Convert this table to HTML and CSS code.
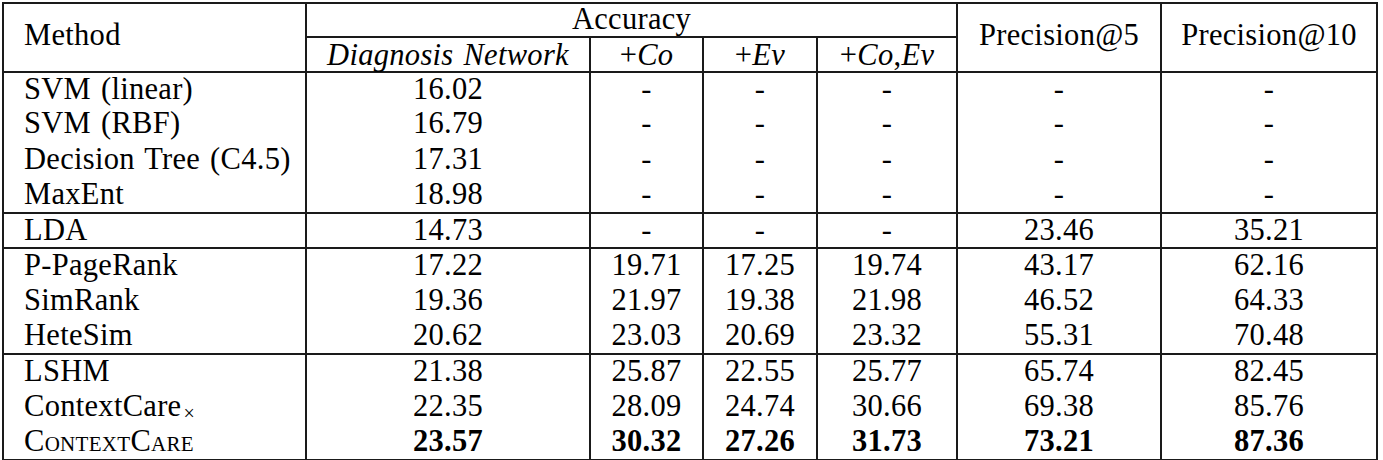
FILE: index.html
```html
<!DOCTYPE html>
<html lang="en">
<head>
  <meta charset="UTF-8">
  <meta name="viewport" content="width=device-width, initial-scale=1.0">
  <title>Results</title>
  <link rel="stylesheet" href="styles.css">
</head>
<body>
  <table class="results">
    <colgroup>
      <col class="c_method">
      <col class="c_diag">
      <col class="c_co">
      <col class="c_ev">
      <col class="c_coev">
      <col class="c_p5">
      <col class="c_p10">
    </colgroup>
    <thead>
      <tr class="head_top">
        <th class="method mid" rowspan="2">Method</th>
        <th class="group" colspan="4">Accuracy</th>
        <th class="mid" rowspan="2">Precision@5</th>
        <th class="mid" rowspan="2">Precision@10</th>
      </tr>
      <tr class="head_sub">
        <th><i>Diagnosis Network</i></th>
        <th>+<i>Co</i></th>
        <th>+<i>Ev</i></th>
        <th>+<i>Co</i>,<i>Ev</i></th>
      </tr>
    </thead>
    <!-- 分类器 -->
    <tbody>
      <tr><td class="method">SVM (linear)</td><td>16.02</td><td>-</td><td>-</td><td>-</td><td>-</td><td>-</td></tr>
      <tr><td class="method">SVM (RBF)</td><td>16.79</td><td>-</td><td>-</td><td>-</td><td>-</td><td>-</td></tr>
      <tr><td class="method">Decision Tree (C4.5)</td><td>17.31</td><td>-</td><td>-</td><td>-</td><td>-</td><td>-</td></tr>
      <tr><td class="method">MaxEnt</td><td>18.98</td><td>-</td><td>-</td><td>-</td><td>-</td><td>-</td></tr>
    </tbody>
    <!-- 主题模型 -->
    <tbody>
      <tr><td class="method">LDA</td><td>14.73</td><td>-</td><td>-</td><td>-</td><td>23.46</td><td>35.21</td></tr>
    </tbody>
    <!-- 图排序 -->
    <tbody>
      <tr><td class="method">P-PageRank</td><td>17.22</td><td>19.71</td><td>17.25</td><td>19.74</td><td>43.17</td><td>62.16</td></tr>
      <tr><td class="method">SimRank</td><td>19.36</td><td>21.97</td><td>19.38</td><td>21.98</td><td>46.52</td><td>64.33</td></tr>
      <tr><td class="method">HeteSim</td><td>20.62</td><td>23.03</td><td>20.69</td><td>23.32</td><td>55.31</td><td>70.48</td></tr>
    </tbody>
    <!-- 本文方法 -->
    <tbody>
      <tr><td class="method">LSHM</td><td>21.38</td><td>25.87</td><td>22.55</td><td>25.77</td><td>65.74</td><td>82.45</td></tr>
      <tr><td class="method">ContextCare<sub>×</sub></td><td>22.35</td><td>28.09</td><td>24.74</td><td>30.66</td><td>69.38</td><td>85.76</td></tr>
      <tr class="best"><td class="method sc">ContextCare</td><td>23.57</td><td>30.32</td><td>27.26</td><td>31.73</td><td>73.21</td><td>87.36</td></tr>
    </tbody>
  </table>
</body>
</html>
```

FILE: styles.css
```css
* {
  margin: 0;
  padding: 0;
}
body {
  padding: 2px 0 0 2px;
  background-color: #fff;
  color: #000;
  font-family: "Liberation Serif", "Times New Roman", serif;
  font-size: 30.5px;
  letter-spacing: 0.3px;
  word-spacing: 2px;
}
.results {
  border-collapse: collapse;
  table-layout: fixed;
  width: 1376px;
  border: 2px solid #1a1a1a;
}
.c_method { width: 303px; }
.c_diag { width: 284px; }
.c_co { width: 113px; }
.c_ev { width: 114px; }
.c_coev { width: 140px; }
.c_p5 { width: 204px; }
.c_p10 { width: 216px; }

.results th,
.results td {
  border-left: 2px solid #1a1a1a;
  border-right: 2px solid #1a1a1a;
  text-align: center;
  vertical-align: top;
  font-weight: normal;
  line-height: 28px;
  white-space: nowrap;
}
.results td {
  padding-top: 2px;
}
.results tbody tr {
  height: 35.3px;
}
.results tbody {
  border-top: 2px solid #1a1a1a;
}
.results .method {
  text-align: left;
  padding-left: 20px;
}
.head_top {
  height: 34px;
}
.head_top th {
  padding-top: 1px;
}
.head_top .group {
  border-bottom: 2px solid #1a1a1a;
}
.head_sub {
  height: 35px;
}
.head_sub th {
  padding-top: 3px;
}
.results th.mid {
  vertical-align: middle;
  padding-top: 0;
  padding-bottom: 6px;
}
.results sub {
  font-size: 20px;
  vertical-align: -4px;
  line-height: 0;
  margin-left: 2px;
}
.sc {
  font-variant: small-caps;
}
.best td {
  font-weight: bold;
}
.best td.method {
  font-weight: normal;
}
```
